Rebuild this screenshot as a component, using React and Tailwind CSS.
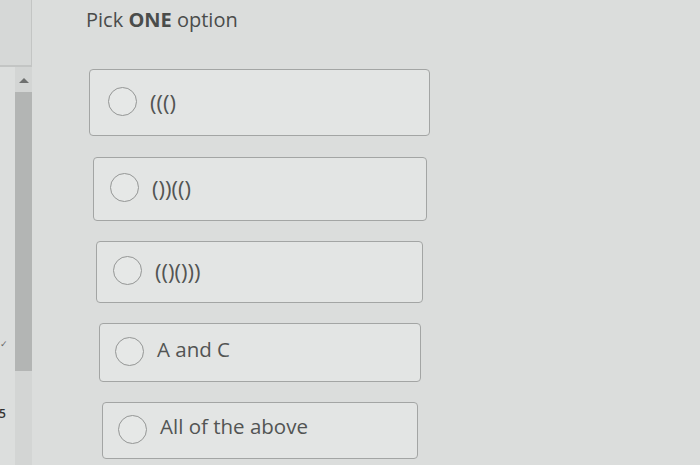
const OPTIONS = [
  { label: '((()', ml: 'ml-[89px]', w: 'w-[341px]', h: 'h-[67px]', mt: 'mt-[35px]', pl: 'pl-[18px]', size: 'text-[22px]', dy: '-mt-[1px]' },
  { label: '())(()', ml: 'ml-[93px]', w: 'w-[334px]', h: 'h-[64px]', mt: 'mt-[21px]', pl: 'pl-[16px]', size: 'text-[22px]', dy: '-mt-[1px]' },
  { label: '(()()))', ml: 'ml-[96px]', w: 'w-[327px]', h: 'h-[62px]', mt: 'mt-[20px]', pl: 'pl-[16px]', size: 'text-[22px]', dy: '-mt-[2px]' },
  { label: 'A and C', ml: 'ml-[99px]', w: 'w-[322px]', h: 'h-[59px]', mt: 'mt-[20px]', pl: 'pl-[15px]', size: 'text-[20.5px]', dy: '-mt-[6px]' },
  { label: 'All of the above', ml: 'ml-[102px]', w: 'w-[316px]', h: 'h-[57px]', mt: 'mt-[20px]', pl: 'pl-[15px]', size: 'text-[20.5px]', dy: '-mt-[8px]' },
];

function Option({ opt }) {
  return (
    <div
      className={`${opt.ml} ${opt.w} ${opt.h} ${opt.mt} ${opt.pl} flex items-center rounded-[4px] border-[1.5px] border-[#a3a5a4] bg-[#e3e5e4]`}
    >
      <span className="-mt-[3px] h-[29px] w-[29px] shrink-0 rounded-full border-[1.5px] border-[#949695] bg-[#e6e8e7]" />
      <span className={`ml-[13px] ${opt.dy} ${opt.size} text-[#525453]`}>{opt.label}</span>
    </div>
  );
}

export default function App() {
  return (
    <div
      className="flex h-[465px] w-[700px] overflow-hidden bg-[#dbdddc] text-[#4f5150]"
      style={{ fontFamily: '"Open Sans", "Noto Sans", sans-serif' }}
    >
      {/* left rail with its scrollbar */}
      <div className="flex w-[32px] shrink-0 flex-col">
        <div className="h-[67px] border-b-2 border-r border-[#c3c5c4] bg-[#d6d8d7]" />
        <div className="flex flex-1">
          <div className="flex w-[15px] flex-col bg-[#dcdedd]">
            <span className="ml-0 mt-[272px] text-[9px] leading-none text-[#666]">✓</span>
            <span className="-ml-[1px] mt-[60px] text-[12px] font-semibold leading-none text-[#333]">5</span>
          </div>
          <div className="flex w-[17px] flex-col items-center bg-[#d3d5d4]">
            <span className="mt-[11px] h-0 w-0 border-x-[5px] border-b-[5px] border-x-transparent border-b-[#6e706f]" />
            <div className="mt-[9px] h-[279px] w-[17px] bg-[#b3b5b4]" />
          </div>
        </div>
      </div>

      {/* question */}
      <div className="-ml-[32px] flex flex-col">
        <h1 className="ml-[86px] mt-[6px] text-[20px] leading-[28px] text-[#4a4c4b]">
          Pick <span className="font-bold">ONE</span> option
        </h1>
        {OPTIONS.map((opt) => (
          <Option key={opt.label} opt={opt} />
        ))}
      </div>
    </div>
  );
}
